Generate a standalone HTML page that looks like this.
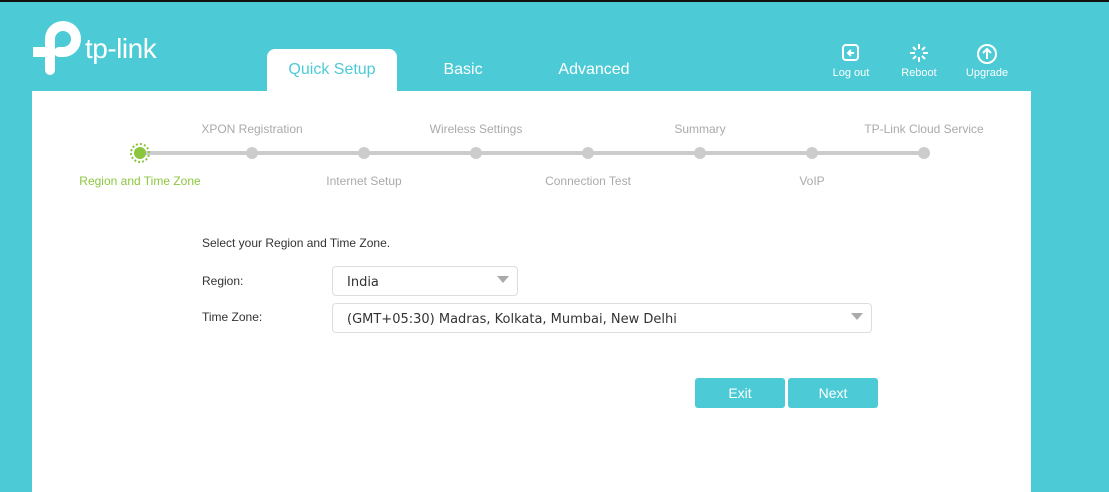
<!DOCTYPE html>
<html><head><style>
body{margin:0;width:1109px;height:492px;background:#4ccbd6;font-family:"Liberation Sans",Arial,sans-serif;position:relative;overflow:hidden}
.a{position:absolute}
.top{left:0;top:0;width:1109px;height:2px;background:#111}
.panel{left:32px;top:91px;width:999px;height:401px;background:#fff}
.tab{top:49px;height:42px;line-height:42px;font-size:16px;color:#fff;text-align:center}
.qs{left:267px;width:130px;background:#fff;color:#4ccbd6;border-radius:8px 8px 0 0}
.ic{color:#fff;font-size:11px;text-align:center;width:60px;top:67px}
.line{left:140px;top:151px;width:784px;height:4px;background:#ccc}
.dot{width:12px;height:12px;border-radius:50%;background:#ccc;top:147px}
.lb{font-size:12px;color:#aaa;width:200px;text-align:center}
.t{font-size:12px;color:#333}
.sel{border:1px solid #ddd;border-radius:4px;background:#fff;font-family:"DejaVu Sans",sans-serif;font-size:13px;color:#333;box-sizing:border-box;padding-left:14px}
.arr{position:absolute;right:8px;top:9px;width:0;height:0;border-left:6px solid transparent;border-right:6px solid transparent;border-top:7px solid #aaa}
.btn{top:378px;height:30px;line-height:30px;width:90px;background:#4ccbd6;color:#fff;font-size:14px;text-align:center;border-radius:3px}
</style></head><body>
<div class="a top"></div>
<svg class="a" style="left:0;top:0" width="90" height="80">
<path d="M50 70 V39 A13 13 0 1 1 63 52 H59" fill="none" stroke="#fff" stroke-width="10" stroke-linecap="round"/>
<path d="M33 52 H50" fill="none" stroke="#fff" stroke-width="10"/>
</svg>
<div class="a" style="left:85px;top:33px;color:#fff;font-size:28px;letter-spacing:-0.5px">tp-link</div>
<div class="a panel"></div>
<div class="a tab qs">Quick Setup</div>
<div class="a tab" style="left:423px;width:80px">Basic</div>
<div class="a tab" style="left:544px;width:100px">Advanced</div>
<svg class="a" style="left:841px;top:43px" width="20" height="20"><rect x="2" y="2" width="15" height="15" rx="3" fill="none" stroke="#fff" stroke-width="2"/><path d="M13 10 H8 M10 7 L7 10 L10 13" stroke="#fff" stroke-width="2" fill="none"/></svg>
<div class="a ic" style="left:821px">Log out</div>
<svg class="a" style="left:909px;top:43px" width="20" height="20" stroke="#fff" stroke-width="2"><path d="M10 1v5M10 14v5M1 10h5M14 10h5M4 4l3 3M13 13l3 3M16 4l-3 3M4 16l3-3"/></svg>
<div class="a ic" style="left:889px">Reboot</div>
<svg class="a" style="left:976px;top:43px" width="22" height="22"><circle cx="11" cy="11" r="9" fill="none" stroke="#fff" stroke-width="2"/><path d="M11 16V7M7 10l4-4 4 4" stroke="#fff" stroke-width="2" fill="none"/></svg>
<div class="a ic" style="left:957px">Upgrade</div>

<div class="a line"></div>
<div class="a" style="left:130px;top:143px;width:16px;height:16px;border:2px dotted #8cc63f;border-radius:50%;"></div>
<div class="a" style="left:134px;top:147px;width:12px;height:12px;background:#8cc63f;border-radius:50%"></div>
<div class="a dot" style="left:246px"></div><div class="a dot" style="left:358px"></div><div class="a dot" style="left:470px"></div><div class="a dot" style="left:582px"></div><div class="a dot" style="left:694px"></div><div class="a dot" style="left:806px"></div><div class="a dot" style="left:918px"></div>
<div class="a lb" style="left:40px;top:174px;color:#8cc63f">Region and Time Zone</div>
<div class="a lb" style="left:152px;top:122px">XPON Registration</div>
<div class="a lb" style="left:264px;top:174px">Internet Setup</div>
<div class="a lb" style="left:376px;top:122px">Wireless Settings</div>
<div class="a lb" style="left:488px;top:174px">Connection Test</div>
<div class="a lb" style="left:600px;top:122px">Summary</div>
<div class="a lb" style="left:712px;top:174px">VoIP</div>
<div class="a lb" style="left:824px;top:122px">TP-Link Cloud Service</div>

<div class="a t" style="left:202px;top:236px">Select your Region and Time Zone.</div>
<div class="a t" style="left:202px;top:274px">Region:</div>
<div class="a t" style="left:202px;top:310px">Time Zone:</div>
<div class="a sel" style="left:332px;top:266px;width:186px;height:30px;line-height:32px">India<div class="arr"></div></div>
<div class="a sel" style="left:332px;top:303px;width:540px;height:30px;line-height:32px">(GMT+05:30) Madras, Kolkata, Mumbai, New Delhi<div class="arr"></div></div>
<div class="a btn" style="left:695px">Exit</div>
<div class="a btn" style="left:788px">Next</div>
</body></html>
